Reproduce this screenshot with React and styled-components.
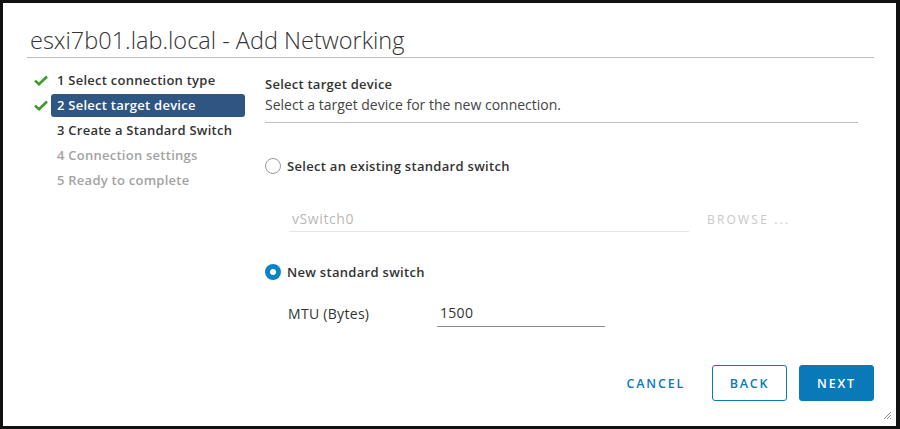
import React from "react";
import styled, { createGlobalStyle } from "styled-components";

const GlobalStyle = createGlobalStyle`
  html, body {
    margin: 0;
    padding: 0;
    background: #fff;
  }
  * { box-sizing: border-box; }
`;

const Frame = styled.div`
  width: 900px;
  height: 429px;
  border: 3px solid #111;
  border-right-width: 4px;
  background: #fff;
  position: relative;
  font-family: "Open Sans", "Liberation Sans", sans-serif;
  color: #333;
  display: flex;
  flex-direction: column;
  padding: 22px 22px 0 24px;
`;

const Title = styled.h1`
  margin: 0;
  font-weight: 300;
  font-size: 23.5px;
  line-height: 30px;
  color: #333;
  padding-left: 3px;
  padding-bottom: 2px;
  border-bottom: 1px solid #bdbdbd;
`;

const Body = styled.div`
  display: flex;
  flex: 1;
  padding-top: 11px;
`;

const Nav = styled.ul`
  list-style: none;
  margin: 0;
  padding: 0;
  width: 218px;
  display: flex;
  flex-direction: column;
  gap: 2px;
`;

const NavItem = styled.li`
  display: flex;
  align-items: center;
  height: 23px;
`;

const Check = styled.span`
  width: 24px;
  display: flex;
  align-items: center;
  padding-left: 7px;
`;

const NavLabel = styled.span`
  flex: 1;
  height: 23px;
  line-height: 23px;
  padding-left: 6px;
  font-size: 13px;
  font-weight: 600;
  letter-spacing: 0.25px;
  border-radius: 3px;
  color: ${(p) => (p.$active ? "#fff" : p.$disabled ? "#a3a3a3" : "#333")};
  background: ${(p) => (p.$active ? "#2f5683" : "transparent")};
`;

const Content = styled.div`
  flex: 1;
  padding-left: 20px;
  padding-right: 16px;
  display: flex;
  flex-direction: column;
`;

const Header = styled.div`
  border-bottom: 1px solid #bdbdbd;
  padding-bottom: 8px;
`;

const HeaderTitle = styled.div`
  font-size: 13px;
  font-weight: 600;
  letter-spacing: 0.25px;
  line-height: 18px;
  margin-top: 6px;
`;

const HeaderText = styled.div`
  font-size: 14px;
  line-height: 18px;
  margin-top: 3px;
  color: #444;
`;

const RadioRow = styled.label`
  display: flex;
  align-items: center;
  gap: 6px;
  font-size: 13px;
  font-weight: 600;
  letter-spacing: 0.3px;
  margin-top: ${(p) => p.$top}px;
  height: 18px;
`;

const RadioCircle = styled.span`
  width: 16px;
  height: 16px;
  border-radius: 50%;
  border: ${(p) => (p.$checked ? "none" : "1px solid #9a9a9a")};
  background: ${(p) => (p.$checked ? "#0a84c6" : "#fff")};
  display: flex;
  align-items: center;
  justify-content: center;
  &::after {
    content: "";
    display: ${(p) => (p.$checked ? "block" : "none")};
    width: 6px;
    height: 6px;
    border-radius: 50%;
    background: #fff;
  }
`;

const SwitchRow = styled.div`
  display: flex;
  align-items: flex-end;
  margin-top: 35px;
  padding-left: 24px;
`;

const TextField = styled.div`
  width: ${(p) => p.$w}px;
  border-bottom: 1px solid ${(p) => (p.$muted ? "#e6e6e6" : "#8c8c8c")};
  font-size: 14px;
  letter-spacing: ${(p) => (p.$muted ? "0.6px" : "0.3px")};
  line-height: 18px;
  padding: 0 0 ${(p) => (p.$muted ? "3px" : "4px")} 3px;
  color: ${(p) => (p.$muted ? "#b8b8b8" : "#333")};
`;

const Browse = styled.span`
  margin-left: 18px;
  font-size: 12px;
  letter-spacing: 2.2px;
  color: #c8c8c8;
  padding-bottom: 4px;
`;

const FieldRow = styled.div`
  display: flex;
  align-items: flex-end;
  margin-top: 23px;
  padding-left: 23px;
`;

const FieldLabel = styled.span`
  width: 149px;
  font-size: 14px;
  letter-spacing: 0.3px;
  line-height: 18px;
  padding-bottom: 4px;
`;

const Footer = styled.div`
  display: flex;
  justify-content: flex-end;
  align-items: center;
  gap: 12px;
  margin-top: 38px;
  margin-right: -16px;
`;

const Button = styled.button`
  height: 36px;
  width: ${(p) => (p.$flat ? "auto" : "75px")};
  padding: 0 ${(p) => (p.$flat ? "14px" : "0")};
  border-radius: 3px;
  font-family: "Open Sans", "Liberation Sans", sans-serif;
  font-size: 12.5px;
  font-weight: 600;
  letter-spacing: 1.8px;
  border: 1px solid ${(p) => (p.$flat ? "transparent" : "#0a79b8")};
  background: ${(p) => (p.$primary ? "#0a79b8" : "#fff")};
  color: ${(p) => (p.$primary ? "#fff" : "#0a79b8")};
`;

const Grip = styled.svg`
  position: absolute;
  right: 4px;
  bottom: 6px;
`;

const CheckIcon = () => (
  <svg width="14" height="11" viewBox="0 0 14 11">
    <path d="M1 5.6 L5 9.2 L13 1.5" fill="none" stroke="#3c9a28" strokeWidth="2.6" />
  </svg>
);

const steps = [
  { label: "1 Select connection type", done: true },
  { label: "2 Select target device", done: true, active: true },
  { label: "3 Create a Standard Switch" },
  { label: "4 Connection settings", disabled: true },
  { label: "5 Ready to complete", disabled: true },
];

export default function App() {
  return (
    <>
      <GlobalStyle />
      <Frame>
        <Title>esxi7b01.lab.local - Add Networking</Title>
        <Body>
          <Nav>
            {steps.map((s) => (
              <NavItem key={s.label}>
                <Check>{s.done && <CheckIcon />}</Check>
                <NavLabel $active={s.active} $disabled={s.disabled}>
                  {s.label}
                </NavLabel>
              </NavItem>
            ))}
          </Nav>
          <Content>
            <Header>
              <HeaderTitle>Select target device</HeaderTitle>
              <HeaderText>Select a target device for the new connection.</HeaderText>
            </Header>
            <RadioRow $top={34}>
              <RadioCircle />
              Select an existing standard switch
            </RadioRow>
            <SwitchRow>
              <TextField $w={400} $muted>vSwitch0</TextField>
              <Browse>BROWSE ...</Browse>
            </SwitchRow>
            <RadioRow $top={31}>
              <RadioCircle $checked />
              New standard switch
            </RadioRow>
            <FieldRow>
              <FieldLabel>MTU (Bytes)</FieldLabel>
              <TextField $w={168}>1500</TextField>
            </FieldRow>
            <Footer>
              <Button $flat>CANCEL</Button>
              <Button>BACK</Button>
              <Button $primary>NEXT</Button>
            </Footer>
          </Content>
        </Body>
        <Grip width="9" height="9" viewBox="0 0 9 9">
          <path d="M8 1 L1 8 M8 4 L4 8 M8 7 L7 8" stroke="#888" strokeWidth="1" />
        </Grip>
      </Frame>
    </>
  );
}
